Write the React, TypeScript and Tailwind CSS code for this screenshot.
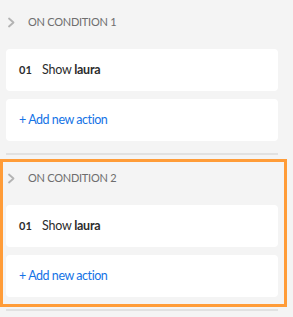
import React from "react";

function Chevron() {
  return (
    <svg width="9" height="11" viewBox="0 0 9 11" className="shrink-0">
      <path d="M2 1.5 L6.5 5.5 L2 9.5" fill="none" stroke="#b3b3b3" strokeWidth="1.8" strokeLinecap="round" strokeLinejoin="round" />
    </svg>
  );
}

function Section({ n, highlighted }: { n: number; highlighted?: boolean }) {
  return (
    <div className="relative">
      <div className="h-[46px] flex items-center pl-[7px] gap-[12px]">
        <Chevron />
        <span className="text-[11px] tracking-[-0.25px] text-[#6e6e6e] pt-px">ON CONDITION {n}</span>
      </div>
      <div className="flex flex-col gap-[8px] pl-[6px] pr-[15px] pt-[4px]">
        <div className="h-[42px] bg-white rounded-[4px] flex items-center pl-[13px]">
          <span className="text-[11px] font-bold text-[#2c2c2c] w-[23px]">01</span>
          <span className="text-[12.5px] tracking-[-0.25px] text-[#2c2c2c]">
            Show <span className="font-bold">laura</span>
          </span>
        </div>
        <div className="h-[42px] bg-white rounded-[4px] flex items-center pl-[13px]">
          <span className="text-[12.5px] tracking-[-0.45px] text-[#1473e6]">+ Add new action</span>
        </div>
      </div>
      <div className="mt-[12px] ml-[6px] mr-[15px] h-[2px] bg-[#e1e1e1]" />
      {highlighted && (
        <div className="absolute left-0 top-[4px] w-[287px] h-[148px] border-[3px] border-[#ff9c38] pointer-events-none" />
      )}
    </div>
  );
}

export default function App() {
  return (
    <div className="w-[293px] h-[317px] bg-[#f4f4f4] overflow-hidden" style={{ fontFamily: 'Lato, "Noto Sans", sans-serif' }}>
      <div className="-mt-px">
        <Section n={1} />
        <Section n={2} highlighted />
      </div>
    </div>
  );
}
